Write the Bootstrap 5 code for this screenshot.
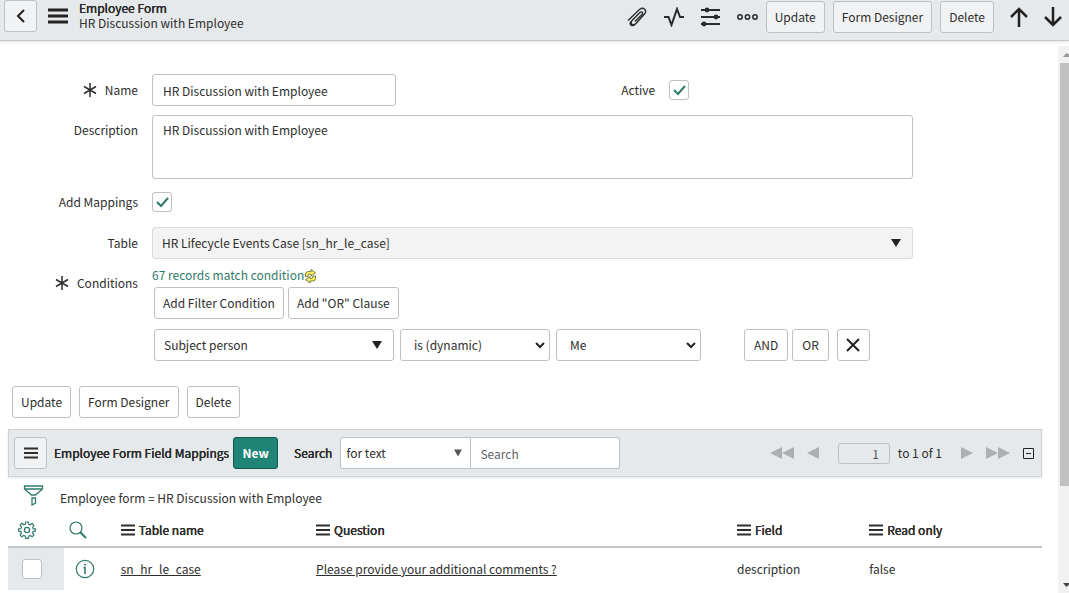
<!DOCTYPE html>
<html lang="en">
<head>
<meta charset="utf-8">
<meta name="viewport" content="width=device-width, initial-scale=1">
<title>HR Discussion with Employee | Employee Form</title>
<link href="https://cdn.jsdelivr.net/npm/bootstrap@5.3.0/dist/css/bootstrap.min.css" rel="stylesheet">
<style>
  :root { --ink: #2e2e2e; --line: #bdc0c4; --bar: #e6e9eb; --teal: #1f8476; --teal-ink: #2f7b6c; }
  body, .btn, .form-control, .form-select { font-family: "Noto Sans CJK SC", "Source Sans Pro", "Open Sans", sans-serif; font-size: 12px; line-height: 16px; color: var(--ink); }
  svg { display: block; flex-shrink: 0; }
  .title-bar { background: var(--bar); border-bottom: 1px solid #c4c8ca; height: 41px; padding: 0 7px 0 4px; box-shadow: 0 1px 3px rgba(0,0,0,.12); z-index: 1; }
  .title-text { line-height: 15px; }
  .title-tools { padding-top: 1px; }
  .menu-btn { margin: 0 11px; height: 32px; }
  .title-text strong, .semi { font-weight: 400; text-shadow: 0 0 0 currentColor, 0 0 0 currentColor; }
  .btn { --bs-btn-border-radius: 3px; height: 32px; padding: 0 8px; border: 1px solid var(--line); background: #fff; white-space: nowrap; }
  .btn-soft { background: #f1f2f4; }
  .btn-square { width: 33px; padding: 0; display: flex; align-items: center; justify-content: center; }
  .btn-new { background: var(--teal); border-color: #16584e; color: #fff; font-weight: 700; width: 45px; margin-left: 4px; }
  .btn-bare { border: 0; background: none; padding: 0; color: var(--ink); }
  .form-control, .form-select { border: 1px solid var(--line); border-radius: 3px; height: 32px; padding: 0 10px; }
  textarea.form-control { height: 64px; padding: 6px 10px; resize: none; }
  .form-select { background-position: right 10px center; background-size: 12px 10px; padding-right: 24px; padding-left: 9px; }
  .pick-triangle { background-image: url("data:image/svg+xml,%3Csvg xmlns='http://www.w3.org/2000/svg' viewBox='0 0 12 10'%3E%3Cpath d='M1 1h10L6 9z' fill='%23222'/%3E%3C/svg%3E"); }
  .pick-small { background-image: url("data:image/svg+xml,%3Csvg xmlns='http://www.w3.org/2000/svg' viewBox='0 0 12 10'%3E%3Cpath d='M2 1.500h8L6 8.500z' fill='%23555'/%3E%3C/svg%3E"); background-position: right 6px center; }
  .pick-chevron { background-image: url("data:image/svg+xml,%3Csvg xmlns='http://www.w3.org/2000/svg' viewBox='0 0 12 10'%3E%3Cpath d='M2 3l4 4 4-4' fill='none' stroke='%23222' stroke-width='2'/%3E%3C/svg%3E"); background-position: right 3px center; padding-left: 13px; }
  .form-select:disabled { background-color: #f3f3f3; border-color: #d8dadc; color: var(--ink); opacity: 1; }
  .form-check-input { width: 20px; height: 20px; margin: 0; border: 1px solid var(--line); border-radius: 3px; display: block; }
  .form-check-input:checked { background-color: #fff; border-color: var(--line); background-size: 20px; background-image: url("data:image/svg+xml,%3Csvg xmlns='http://www.w3.org/2000/svg' viewBox='0 0 20 20'%3E%3Cpath d='M5 10l4 4 7-8' fill='none' stroke='%232f7b6c' stroke-width='2'/%3E%3C/svg%3E"); }
  .page-body { padding: 33px 16px 0 8px; }
  .field-row { display: grid; grid-template-columns: 130px minmax(0, 1fr); column-gap: 14px; }
  .field-label { display: flex; align-items: center; justify-content: flex-end; gap: 8px; height: 32px; }
  .fields-wide { width: 85.5%; }
  .name-box { width: 32%; }
  .active-pair { margin-left: auto; margin-right: 29.4%; gap: 14px; }
  .row-desc { margin-top: 9px; }
  .row-desc .field-label { height: 30px; }
  .row-map { margin-top: 7px; }
  .row-table { margin-top: 9px; }
  .row-cond { margin-top: 8px; }
  .match-row { height: 20px; }
  .match-link { color: var(--teal-ink); text-decoration: none; }
  .cond-line { margin-left: 2px; }
  .cond-fields { margin-top: 10px; gap: 6px; }
  .joiners { margin-left: 37px; }
  .joiners .btn:not(.btn-square) { padding: 0 9px; }
  .who { width: 240px; } .how { width: 150px; } .what { width: 145px; }
  .form-actions { margin: 25px 0 11px 4px; }
  .list-bar { background: var(--bar); border: 1px solid #cdd2d4; height: 48px; padding: 0 7px 0 5px; box-shadow: 0 1px 2px rgba(0,0,0,.1); }
  .list-title { margin-left: 7px; }
  .search-kind { width: 131px; border-radius: 3px 0 0 3px; padding-left: 5px; }
  .search-box { width: 149px; border-radius: 0 3px 3px 0; border-left: 0; padding-left: 9px; }
  .pager { gap: 13px; }
  .page-spot { gap: 8px; margin: 0 6px; }
  .page-box { width: 52px; height: 21px; background: transparent; text-align: right; color: #555; }
  .flip svg { transform: rotate(180deg); }
  .crumb-row { height: 37px; padding-left: 15px; }
  .crumb { margin-left: 16px; padding-top: 4px; }
  .map-table { table-layout: fixed; width: 100%; }
  .map-table th { height: 32px; font-weight: 400; padding: 0; border-bottom: 2px solid #c3c5c8; vertical-align: middle; }
  .map-table td { height: 43px; padding: 0; }
  .map-table td a { color: var(--ink); }
  .pick-cell { background: var(--bar); }
  .gear { margin-left: 10px; } .lens { margin-left: 5px; }
  .row-check { margin-left: 14px; } .info { margin-left: 11px; }
  .scroll-track { width: 11px; background: #f1f1f1; margin-top: 5px; }
  .scroll-thumb { background: #c1c1c1; margin-left: 2px; height: 77.4%; }
</style>
</head>
<body class="vh-100 d-flex flex-column overflow-hidden bg-white">
<svg width="0" height="0" class="position-absolute" aria-hidden="true">
  <symbol id="bars" viewBox="0 0 14 12"><path d="M0 1.500h14M0 6h14M0 10.500h14" stroke="currentColor" stroke-width="2"/></symbol>
  <symbol id="star" viewBox="0 0 14 14"><path d="M7 0v14M1 3.500l12 7M13 3.500l-12 7" stroke="currentColor" stroke-width="1.500"/></symbol>
  <symbol id="tri" viewBox="0 0 12 12"><path d="M0 0l12 6-12 6z" fill="#aab0b3"/></symbol>
</svg>

<header class="title-bar d-flex align-items-start">
  <button class="btn btn-soft btn-square" aria-label="Back"><svg width="12" height="14" viewBox="0 0 12 14"><path d="M9 1L3 7l6 6" fill="none" stroke="#222" stroke-width="2"/></svg></button>
  <button class="btn btn-bare menu-btn" aria-label="Form menu"><svg width="20" height="16" viewBox="0 0 20 16"><path d="M0 2h20M0 8h20M0 14h20" stroke="#222" stroke-width="3"/></svg></button>
  <div class="title-text text-nowrap"><strong class="d-block">Employee Form</strong><span class="d-block">HR Discussion with Employee</span></div>
  <div class="d-flex align-items-center ms-auto title-tools">
    <button class="btn btn-bare" aria-label="Attachments"><svg width="22" height="22" viewBox="0 0 22 22" fill="none" stroke="#2b2b2b" stroke-width="1.400"><path d="M2 14.500L13.500 3.500c4-3 8 .8 5 4.500L10 17.500c-3 3-6.500 0-4-3l8-8c2-1.500 3.500.5 2 2L9 15.500M5 15.500c-2.500 3 1 5.500 4 3"/></svg></button>
    <button class="btn btn-bare ms-3" aria-label="Activity"><svg width="20" height="20" viewBox="0 0 20 20" fill="none" stroke="#2b2b2b" stroke-width="2"><path d="M0 10h4.500l3 8L13 2l3 8h4"/></svg></button>
    <button class="btn btn-bare ms-3" aria-label="Personalize"><svg width="21" height="20" viewBox="0 0 21 20" stroke="#2b2b2b" stroke-width="2"><path d="M1 3h19M1 10h19M1 17h19"/><g stroke="none" fill="#2b2b2b"><circle cx="7" cy="3" r="2.400"/><circle cx="16" cy="10" r="2.400"/><circle cx="4" cy="17" r="2.400"/></g></svg></button>
    <button class="btn btn-bare ms-3" aria-label="More options"><svg width="21" height="8" viewBox="0 0 21 8" fill="none" stroke="#2b2b2b" stroke-width="1.500"><circle cx="3" cy="4" r="2.200"/><circle cx="10.500" cy="4" r="2.200"/><circle cx="18" cy="4" r="2.200"/></svg></button>
    <button class="btn btn-soft ms-2">Update</button>
    <button class="btn btn-soft ms-2">Form Designer</button>
    <button class="btn btn-soft ms-2">Delete</button>
    <button class="btn btn-bare ms-3" aria-label="Previous record"><svg width="18" height="20" viewBox="0 0 18 20" fill="none" stroke="#222" stroke-width="2.500"><path d="M9 20V2M1 10l8-8 8 8"/></svg></button>
    <button class="btn btn-bare ms-3" aria-label="Next record"><svg width="18" height="20" viewBox="0 0 18 20" fill="none" stroke="#222" stroke-width="2.500"><path d="M9 0v18M1 10l8 8 8-8"/></svg></button>
  </div>
</header>

<div class="d-flex flex-grow-1 overflow-hidden">
  <main class="page-body flex-grow-1 overflow-hidden">
    <form>
      <div class="field-row">
        <label class="field-label" for="name"><svg width="14" height="14"><use href="#star"/></svg>Name</label>
        <div class="fields-wide d-flex align-items-center">
          <input class="form-control name-box" id="name" value="HR Discussion with Employee">
          <div class="active-pair d-flex align-items-center"><label for="active">Active</label><input class="form-check-input" type="checkbox" id="active" checked></div>
        </div>
      </div>
      <div class="field-row row-desc">
        <label class="field-label" for="desc">Description</label>
        <div class="fields-wide"><textarea class="form-control" id="desc">HR Discussion with Employee</textarea></div>
      </div>
      <div class="field-row row-map">
        <label class="field-label" for="map">Add Mappings</label>
        <div class="d-flex align-items-center"><input class="form-check-input" type="checkbox" id="map" checked></div>
      </div>
      <div class="field-row row-table">
        <label class="field-label" for="tbl">Table</label>
        <div class="fields-wide"><select class="form-select pick-triangle" id="tbl" disabled><option>HR Lifecycle Events Case [sn_hr_le_case]</option></select></div>
      </div>
      <div class="field-row row-cond">
        <label class="field-label" for="who"><svg width="14" height="14"><use href="#star"/></svg>Conditions</label>
        <div>
          <div class="d-flex match-row"><a class="match-link" href="#">67 records match condition</a>
            <a href="#" aria-label="Refresh count"><svg width="13" height="20" viewBox="0 0 13 20" fill="#f6f15a" stroke="#5a5a2c" stroke-width=".8"><path d="M1.500 9.500V7q0-2.500 3-2.500H7v-2l4.500 3.300L7 9V7.200H5q-1 0-1 2.300z"/><path d="M11.500 9v2.500q0 2.500-3 2.500H6v2l-4.500-3.300L6 9.500v1.800h2q1 0 1-2.300z"/></svg></a></div>
          <div class="d-flex gap-1 cond-line"><button type="button" class="btn">Add Filter Condition</button><button type="button" class="btn">Add "OR" Clause</button></div>
          <div class="d-flex cond-line cond-fields">
            <select class="form-select pick-triangle who" id="who"><option>Subject person</option></select>
            <select class="form-select pick-chevron how" aria-label="Operator"><option>is (dynamic)</option></select>
            <select class="form-select pick-chevron what" aria-label="Value"><option>Me</option></select>
            <div class="d-flex gap-1 joiners"><button type="button" class="btn">AND</button><button type="button" class="btn">OR</button>
              <button type="button" class="btn btn-square ms-1" aria-label="Remove condition"><svg width="14" height="14" viewBox="0 0 14 14"><path d="M1 1l12 12M13 1L1 13" stroke="#222" stroke-width="2"/></svg></button></div>
          </div>
        </div>
      </div>
      <div class="d-flex gap-2 form-actions"><button type="button" class="btn">Update</button><button type="button" class="btn">Form Designer</button><button type="button" class="btn">Delete</button></div>
    </form>

    <section>
      <div class="list-bar d-flex align-items-center">
        <button class="btn btn-soft btn-square" aria-label="List menu"><svg width="14" height="12"><use href="#bars"/></svg></button>
        <span class="semi list-title text-nowrap">Employee Form Field Mappings</span>
        <button class="btn btn-new">New</button>
        <label class="semi ms-3 me-2" for="q">Search</label>
        <select class="form-select pick-small search-kind" aria-label="Search field"><option>for text</option></select>
        <input class="form-control search-box" id="q" placeholder="Search">
        <nav class="d-flex align-items-center ms-auto pager" aria-label="Pages">
          <button class="btn btn-bare d-flex align-items-center flip" aria-label="First page"><svg width="12" height="12"><use href="#tri"/></svg><svg width="12" height="12"><use href="#tri"/></svg></button>
          <button class="btn btn-bare flip" aria-label="Previous page"><svg width="12" height="12"><use href="#tri"/></svg></button>
          <div class="page-spot d-flex align-items-center"><input class="form-control page-box" value="1" aria-label="Page"><span class="text-nowrap">to 1 of 1</span></div>
          <button class="btn btn-bare" aria-label="Next page"><svg width="12" height="12"><use href="#tri"/></svg></button>
          <button class="btn btn-bare d-flex align-items-center" aria-label="Last page"><svg width="12" height="12"><use href="#tri"/></svg><svg width="12" height="12"><use href="#tri"/></svg></button>
          <button class="btn btn-bare" aria-label="Collapse list"><svg width="11" height="11" viewBox="0 0 11 11" fill="none" stroke="#222"><path d="M.5.5h10v10H.5zM3 5.500h5"/></svg></button>
        </nav>
      </div>
      <div class="crumb-row d-flex align-items-center">
        <svg width="21" height="21" viewBox="0 0 21 21" fill="none" stroke="#2f7b6c" stroke-width="1.300"><path d="M1.500 1h18v3l-7 6h-4l-7-6zM1.500 4h18M9 13h3.500v5L9 20z"/></svg>
        <span class="crumb">Employee form = HR Discussion with Employee</span>
      </div>
      <table class="map-table">
        <colgroup><col style="width:5.400%"><col style="width:5.500%"><col style="width:18.900%"><col style="width:40.700%"><col style="width:12.800%"><col></colgroup>
        <thead><tr>
          <th><button class="btn btn-bare gear" aria-label="Personalize list"><svg width="18" height="18" viewBox="0 0 18 18" fill="none" stroke="#2f7b6c" stroke-width="1.200"><path d="M7.700 1h2.600l.4 2.200 1.500.6 1.900-1.300 1.800 1.800-1.300 1.900.6 1.500 2.200.4v2l-2.200.5-.6 1.500 1.300 1.900-1.800 1.800-1.900-1.300-1.500.6-.4 2.200H7.700l-.4-2.200-1.500-.6-1.900 1.300-1.800-1.800 1.300-1.900-.6-1.500L.6 10V8l2.200-.4.600-1.500-1.300-1.900 1.800-1.800 1.900 1.300 1.500-.6z"/><circle cx="9" cy="9" r="2.600"/></svg></button></th>
          <th><button class="btn btn-bare lens" aria-label="Search columns"><svg width="18" height="18" viewBox="0 0 18 18" fill="none" stroke="#2f7b6c" stroke-width="1.200"><circle cx="7" cy="7" r="6"/><path d="M11 11l6 6" stroke-width="2"/></svg></button></th>
          <th><span class="semi d-flex align-items-center gap-1"><svg width="14" height="12"><use href="#bars"/></svg>Table name</span></th>
          <th><span class="semi d-flex align-items-center gap-1"><svg width="14" height="12"><use href="#bars"/></svg>Question</span></th>
          <th><span class="semi d-flex align-items-center gap-1"><svg width="14" height="12"><use href="#bars"/></svg>Field</span></th>
          <th><span class="semi d-flex align-items-center gap-1"><svg width="14" height="12"><use href="#bars"/></svg>Read only</span></th>
        </tr></thead>
        <tbody><tr>
          <td class="pick-cell"><input class="form-check-input row-check" type="checkbox" aria-label="Select record"></td>
          <td><a href="#" class="d-block info" aria-label="Preview record"><svg width="20" height="20" viewBox="0 0 20 20" fill="none" stroke="#2f7b6c"><circle cx="10" cy="10" r="8.700" stroke-width="1.200"/><path d="M8.500 8.500H10V15M9 5.500h2" stroke-width="1.600"/></svg></a></td>
          <td><a href="#">sn_hr_le_case</a></td>
          <td><a href="#">Please provide your additional comments ?</a></td>
          <td>description</td>
          <td>false</td>
        </tr></tbody>
      </table>
    </section>
  </main>
  <div class="scroll-track d-flex flex-column flex-shrink-0" aria-hidden="true">
    <svg width="11" height="17" viewBox="0 0 11 17"><path d="M5 11h6V8.500L8.500 7z" fill="#999"/></svg>
    <div class="scroll-thumb"></div>
    <svg class="mt-auto" width="11" height="17" viewBox="0 0 11 17"><path d="M5 7h6v1.500L8.500 11z" fill="#444"/></svg>
  </div>
</div>
<script src="https://cdn.jsdelivr.net/npm/bootstrap@5.3.0/dist/js/bootstrap.bundle.min.js"></script>
</body>
</html>
